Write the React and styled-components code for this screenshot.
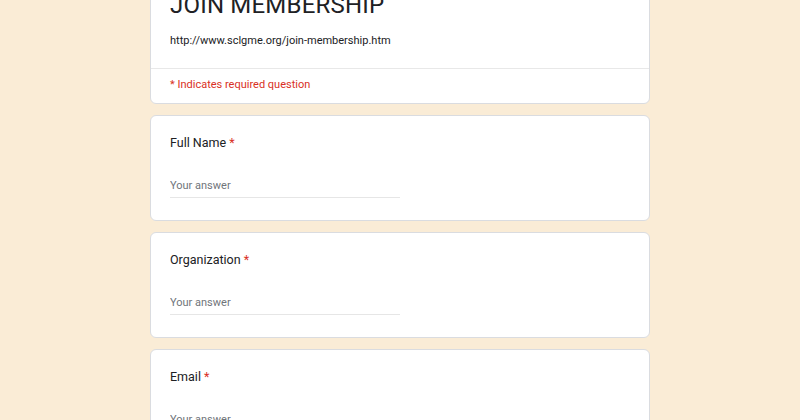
import styled, { createGlobalStyle } from "styled-components";

const GlobalStyle = createGlobalStyle`
    html, body {
        margin: 0;
        padding: 0;
        background: #faecd6;
        overflow: hidden;
    }
    body {
        font-family: Roboto, "Liberation Sans", Arial, sans-serif;
        color: #202124;
    }
`;

const Page = styled.div`
    width: 500px;
    margin: -30px auto 0;
    display: flex;
    flex-direction: column;
    gap: 11px;
`;

const Card = styled.div`
    background: #fff;
    border: 1px solid #dadce0;
    border-radius: 6px;
    box-sizing: border-box;
    padding: ${(p) => (p.$header ? "0" : "18px 19px 22px")};
`;

const HeaderTop = styled.div`
    padding: 19px 19px 19px;
    border-bottom: 1px solid #e8e8e8;
`;

const Title = styled.h1`
    margin: 0;
    font-size: 24px;
    line-height: 31px;
    font-weight: 400;
    letter-spacing: 0.2px;
    color: #202124;
`;

const Url = styled.div`
    margin-top: 12px;
    font-size: 11px;
    line-height: 16px;
    color: #202124;
`;

const Required = styled.div`
    padding: 8px 19px 10px;
    font-size: 11px;
    line-height: 16px;
    color: #d93025;
`;

const Label = styled.div`
    font-size: 12.5px;
    line-height: 18px;
    height: 18px;
    color: #202124;
`;

const Star = styled.span`
    color: #d93025;
    margin-left: 3px;
`;

const Answer = styled.input`
    display: block;
    margin-top: 22px;
    width: 230px;
    height: 24px;
    box-sizing: border-box;
    padding: 0;
    border: none;
    border-bottom: 1px solid #e6e6e6;
    outline: none;
    font-family: Roboto, "Liberation Sans", Arial, sans-serif;
    font-size: 11px;
    color: #202124;
    background: transparent;

    &::placeholder {
        color: #70757a;
    }
`;

const questions = ["Full Name", "Organization", "Email"];

const App = () => {
    return (
        <>
            <GlobalStyle />
            <Page>
                <Card $header>
                    <HeaderTop>
                        <Title>JOIN MEMBERSHIP</Title>
                        <Url>http://www.sclgme.org/join-membership.htm</Url>
                    </HeaderTop>
                    <Required>* Indicates required question</Required>
                </Card>
                {questions.map((q) => (
                    <Card key={q}>
                        <Label>
                            {q}
                            <Star>*</Star>
                        </Label>
                        <Answer placeholder="Your answer" />
                    </Card>
                ))}
            </Page>
        </>
    );
};

export default App;
